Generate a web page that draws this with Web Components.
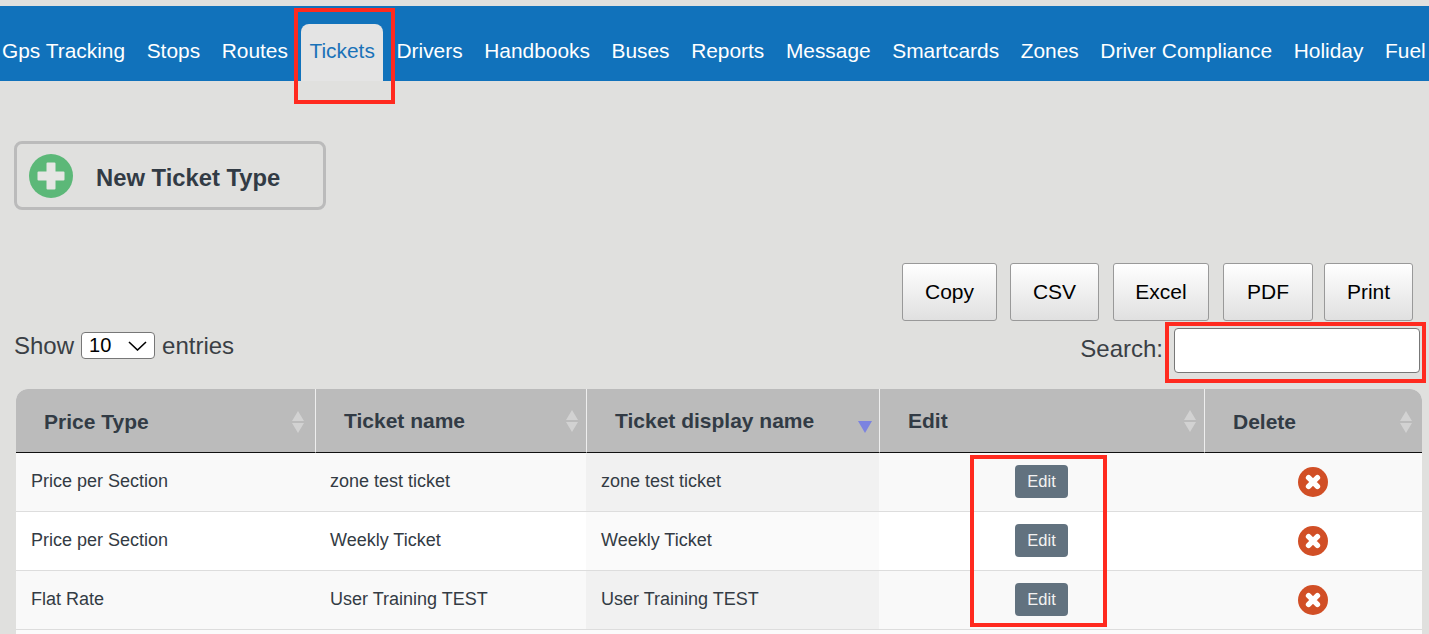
<!DOCTYPE html>
<html>
<head>
<meta charset="utf-8">
<style>
  html, body { margin: 0; padding: 0; background: #e0e0de; }
  body { position: relative; width: 1429px; height: 634px; overflow: hidden; font-family: "Liberation Sans", Arial, sans-serif; color: #333b44; }
</style>
</head>
<body>
<ticket-page>
  <main-nav>
    <nav-item>Gps Tracking</nav-item>
    <nav-item>Stops</nav-item>
    <nav-item>Routes</nav-item>
    <nav-item active>Tickets</nav-item>
    <nav-item>Drivers</nav-item>
    <nav-item>Handbooks</nav-item>
    <nav-item>Buses</nav-item>
    <nav-item>Reports</nav-item>
    <nav-item>Message</nav-item>
    <nav-item>Smartcards</nav-item>
    <nav-item>Zones</nav-item>
    <nav-item>Driver Compliance</nav-item>
    <nav-item>Holiday</nav-item>
    <nav-item>Fuel</nav-item>
  </main-nav>
  <new-button>New Ticket Type</new-button>
  <export-bar>
    <export-button style="--w:95px">Copy</export-button>
    <export-button style="--w:89px;--m:13px">CSV</export-button>
    <export-button style="--w:96px;--m:14px">Excel</export-button>
    <export-button style="--w:90px;--m:14px">PDF</export-button>
    <export-button style="--w:89px;--m:11px">Print</export-button>
  </export-bar>
  <table-controls></table-controls>
  <data-table>
    <head-cell>Price Type</head-cell>
    <head-cell>Ticket name</head-cell>
    <head-cell sort="desc">Ticket display name</head-cell>
    <head-cell>Edit</head-cell>
    <head-cell>Delete</head-cell>
    <table-row odd>
      <span>Price per Section</span><span>zone test ticket</span><span>zone test ticket</span>
    </table-row>
    <table-row>
      <span>Price per Section</span><span>Weekly Ticket</span><span>Weekly Ticket</span>
    </table-row>
    <table-row odd>
      <span>Flat Rate</span><span>User Training TEST</span><span>User Training TEST</span>
    </table-row>
  </data-table>
</ticket-page>
<red-box style="left:294px;top:8px;width:101px;height:96px"></red-box>
<red-box style="left:1165px;top:322px;width:261px;height:61px"></red-box>
<red-box style="left:970px;top:455px;width:137px;height:172px"></red-box>

<script>
class TicketPage extends HTMLElement {
    constructor() {
        super();
        this.attachShadow({ mode: 'open' });
        this.shadowRoot.innerHTML = `
            <style>
                :host { display: flex; flex-direction: column; padding-top: 6px; }
            </style>
            <slot></slot>
        `;
    }
}

class MainNav extends HTMLElement {
    constructor() {
        super();
        this.attachShadow({ mode: 'open' });
        this.shadowRoot.innerHTML = `
            <style>
                :host {
                    display: flex;
                    align-items: flex-end;
                    gap: 5.6px;
                    height: 75px;
                    background: #1172bb;
                    white-space: nowrap;
                    overflow: hidden;
                }
            </style>
            <slot></slot>
        `;
    }
}

class NavItem extends HTMLElement {
    constructor() {
        super();
        this.attachShadow({ mode: 'open' });
        this.shadowRoot.innerHTML = `
            <style>
                :host {
                    display: flex;
                    align-items: center;
                    flex: none;
                    box-sizing: border-box;
                    height: 57px;
                    padding: 0 8px 4px;
                    font-size: 20.9px;
                    color: #fff;
                    border-radius: 8px 8px 0 0;
                }
                :host(:first-child) { margin-left: -6px; }
                :host([active]) { background: #e4e4e4; color: #1a72b8; }
            </style>
            <slot></slot>
        `;
    }
}

class NewButton extends HTMLElement {
    constructor() {
        super();
        this.attachShadow({ mode: 'open' });
        this.shadowRoot.innerHTML = `
            <style>
                :host {
                    display: flex;
                    align-items: center;
                    box-sizing: border-box;
                    width: 312px;
                    height: 69px;
                    margin: 60px 0 0 14px;
                    padding-left: 12px;
                    border: 3px solid #bbb;
                    border-radius: 8px;
                    font-size: 23.8px;
                    font-weight: bold;
                    color: #323b45;
                }
                svg { width: 44px; height: 44px; margin-right: 23px; flex: none; }
                span { padding-top: 5px; }
            </style>
            <svg viewBox="0 0 44 44">
                <circle cx="22" cy="22" r="22" fill="#5cb878"/>
                <path d="M18.5 8.500h7a1 1 0 0 1 1 1v8h8a1 1 0 0 1 1 1v7a1 1 0 0 1-1 1h-8v8a1 1 0 0 1-1 1h-7a1 1 0 0 1-1-1v-8h-8a1 1 0 0 1-1-1v-7a1 1 0 0 1 1-1h8v-8a1 1 0 0 1 1-1z" fill="#e6e6e4"/>
            </svg>
            <span><slot></slot></span>
        `;
    }
}

class ExportBar extends HTMLElement {
    constructor() {
        super();
        this.attachShadow({ mode: 'open' });
        this.shadowRoot.innerHTML = `
            <style>
                :host {
                    display: flex;
                    justify-content: flex-end;
                    margin: 53px 16px 0 0;
                }
            </style>
            <slot></slot>
        `;
    }
}

class ExportButton extends HTMLElement {
    constructor() {
        super();
        this.attachShadow({ mode: 'open' });
        this.shadowRoot.innerHTML = `
            <style>
                :host {
                    display: flex;
                    align-items: center;
                    justify-content: center;
                    box-sizing: border-box;
                    width: var(--w);
                    height: 58px;
                    margin-left: var(--m, 0);
                    border: 1px solid #999;
                    border-radius: 3px;
                    font-size: 21px;
                    color: #000;
                    background: linear-gradient(#fff, #e0e0e0);
                }
            </style>
            <slot></slot>
        `;
    }
}

class TableControls extends HTMLElement {
    constructor() {
        super();
        this.attachShadow({ mode: 'open' });
        this.shadowRoot.innerHTML = `
            <style>
                :host {
                    display: flex;
                    justify-content: space-between;
                    height: 68px;
                    font-size: 24px;
                    color: #3a3f45;
                }
                .show { display: flex; align-items: center; gap: 7px; height: 49px; margin-left: 14px; }
                .select {
                    display: flex;
                    align-items: center;
                    justify-content: space-between;
                    box-sizing: border-box;
                    width: 74px;
                    height: 27px;
                    margin-top: -1px;
                    padding: 1px 7px 0;
                    background: #fff;
                    border: 1px solid #777;
                    border-radius: 4px;
                    font-size: 20px;
                    color: #000;
                }
                .search { display: flex; align-items: flex-start; gap: 11px; margin: 7px 9px 0 0; }
                .search span { line-height: 41px; }
                .input {
                    box-sizing: border-box;
                    width: 246px;
                    height: 45px;
                    background: #fff;
                    border: 1px solid #777;
                    border-radius: 4px;
                }
            </style>
            <div class="show">
                <span>Show</span>
                <div class="select">
                    <span>10</span>
                    <svg width="19" height="10" viewBox="0 0 19 10"><path d="M1 1l8.500 8 8.500-8" fill="none" stroke="#000" stroke-width="1.6"/></svg>
                </div>
                <span>entries</span>
            </div>
            <div class="search">
                <span>Search:</span>
                <div class="input"></div>
            </div>
        `;
    }
}

class DataTable extends HTMLElement {
    constructor() {
        super();
        this.attachShadow({ mode: 'open' });
        this.shadowRoot.innerHTML = `
            <style>
                :host {
                    display: grid;
                    grid-template-columns: 299px 271px 293px 325px 218px;
                    grid-auto-rows: max-content;
                    width: 1406px;
                    height: 245px;
                    margin-left: 16px;
                    background: #fbfbfb;
                    border-radius: 12px 12px 0 0;
                    overflow: hidden;
                }
            </style>
            <slot></slot>
        `;
    }
}

class HeadCell extends HTMLElement {
    constructor() {
        super();
        this.attachShadow({ mode: 'open' });
        const sorted = this.getAttribute('sort') === 'desc';
        const arrows = sorted
            ? '<svg class="sorted" width="14" height="12" viewBox="0 0 14 12"><path d="M0 0h14L7 12z" fill="#7b83e0"/></svg>'
            : '<svg width="14" height="22" viewBox="0 0 14 22"><path d="M7 0l6 10H1z" fill="#d2d2d2"/><path d="M7 22l6-10H1z" fill="#d2d2d2"/></svg>';
        this.shadowRoot.innerHTML = `
            <style>
                :host {
                    display: flex;
                    align-items: center;
                    justify-content: space-between;
                    box-sizing: border-box;
                    height: 64px;
                    padding: 0 7px 0 28px;
                    background: #bbb;
                    border-bottom: 1px solid #111;
                    border-left: 1px solid #eee;
                    font-size: 21px;
                    font-weight: bold;
                    color: #323b45;
                }
                :host(:first-child) { border-left: 0; padding: 2px 10px 0 28px; }
                :host(:nth-child(5)) { padding: 2px 9px 0 28px; }
                .sorted { margin-top: 12px; }
            </style>
            <slot></slot>
            ${arrows}
        `;
    }
}

class TableRow extends HTMLElement {
    constructor() {
        super();
        this.attachShadow({ mode: 'open' });
        this.shadowRoot.innerHTML = `
            <style>
                :host {
                    display: grid;
                    grid-column: 1 / -1;
                    grid-template-columns: 299px 271px 293px 325px 218px;
                    height: 59px;
                    box-sizing: border-box;
                    border-bottom: 1px solid #ddd;
                    background: #fff;
                    font-size: 18px;
                    color: #333b44;
                    --sorted: #fafafa;
                }
                :host([odd]) { background: #f9f9f9; --sorted: #f1f1f1; }
                .cell { display: flex; align-items: center; padding: 0 0 2px 15px; }
                .mid { background: var(--sorted); }
                .center { justify-content: center; padding: 0; }
                .edit {
                    display: flex;
                    align-items: center;
                    justify-content: center;
                    width: 53px;
                    height: 33px;
                    margin-bottom: 1px;
                    border-radius: 4px;
                    background: #62727f;
                    color: #f2f2f2;
                    font-size: 16.5px;
                }
            </style>
            <div class="cell"></div>
            <div class="cell"></div>
            <div class="cell mid"></div>
            <div class="cell center"><div class="edit">Edit</div></div>
            <div class="cell center">
                <svg width="30" height="30" viewBox="0 0 30 30">
                    <circle cx="15" cy="15" r="15" fill="#d14f26"/>
                    <path d="M10.600 10.600l8.800 8.800M19.400 10.600l-8.800 8.800" fill="none" stroke="#fff" stroke-width="5.500" stroke-linecap="round"/>
                </svg>
            </div>
        `;
    }

    connectedCallback() {
        // one named slot per text cell, so the row's text stays in the page's own markup
        const cells = this.shadowRoot.querySelectorAll('.cell');
        [...this.children].forEach((span, i) => {
            span.slot = 'c' + i;
            const slot = document.createElement('slot');
            slot.name = 'c' + i;
            cells[i].appendChild(slot);
        });
    }
}

class RedBox extends HTMLElement {
    constructor() {
        super();
        this.attachShadow({ mode: 'open' });
        this.shadowRoot.innerHTML = `
            <style>
                :host {
                    display: block;
                    position: absolute;
                    box-sizing: border-box;
                    border: 4px solid #ff2a1f;
                    pointer-events: none;
                }
            </style>
        `;
    }
}

customElements.define('ticket-page', TicketPage);
customElements.define('main-nav', MainNav);
customElements.define('nav-item', NavItem);
customElements.define('new-button', NewButton);
customElements.define('export-bar', ExportBar);
customElements.define('export-button', ExportButton);
customElements.define('table-controls', TableControls);
customElements.define('data-table', DataTable);
customElements.define('head-cell', HeadCell);
customElements.define('table-row', TableRow);
customElements.define('red-box', RedBox);
</script>
</body>
</html>
